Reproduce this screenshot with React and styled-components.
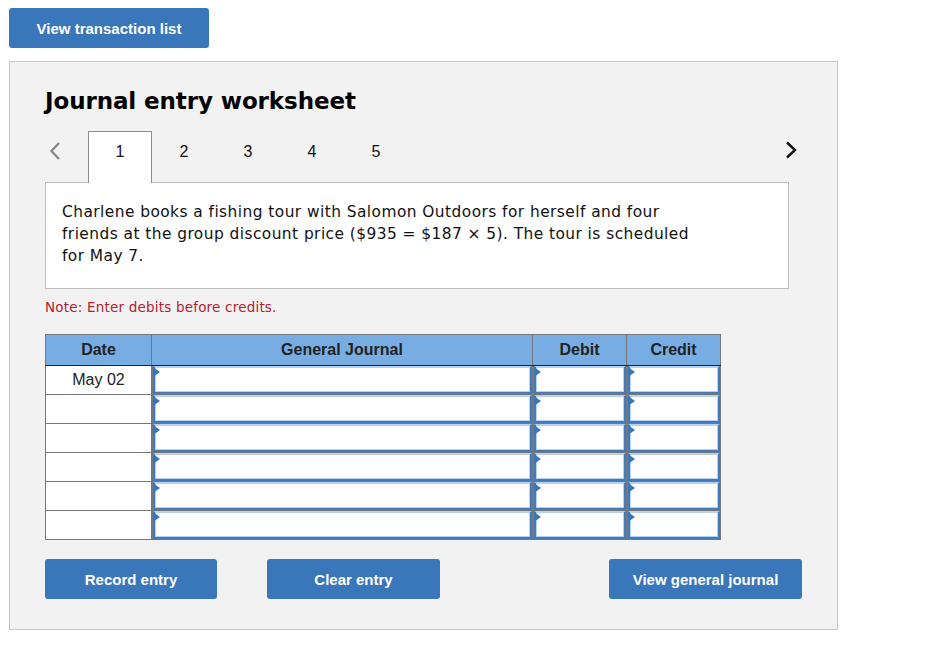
import React from 'react';
import styled, { createGlobalStyle } from 'styled-components';

const GlobalStyle = createGlobalStyle`
  body{
    margin: 0;
    background: #fff;
    font-family: "Liberation Sans", Arial, sans-serif;
  }
`;

const Page = styled.div`
  padding: 8px 0 0 9px;
`;

const Button = styled.button`
  flex-shrink: 0;
  display: inline-flex;
  align-items: center;
  justify-content: center;
  width: ${p => p.w}px;
  height: 40px;
  padding: 0;
  border: 0;
  border-radius: 3px;
  background: #3a76ba;
  color: #fff;
  font-family: "Liberation Sans", Arial, sans-serif;
  font-weight: bold;
  font-size: 15px;
  cursor: pointer;
`;

const Panel = styled.section`
  box-sizing: border-box;
  width: 829px;
  margin-top: 13px;
  padding: 21px 48px 30px 35px;
  background: #f2f2f2;
  border: 1px solid #c8c8c8;
`;

const Heading = styled.h2`
  margin: 0;
  font-family: "DejaVu Sans", Verdana, sans-serif;
  font-size: 23px;
  font-weight: bold;
  letter-spacing: -0.1px;
  line-height: 36px;
  color: #000;
`;

const TabRow = styled.div`
  display: flex;
  align-items: stretch;
  height: 51px;
  margin-top: 12px;
`;

const Arrow = styled.div`
  display: flex;
  align-items: flex-start;
  justify-content: ${p => (p.right ? 'center' : 'flex-start')};
  box-sizing: border-box;
  width: ${p => (p.right ? 44 : 43)}px;
  padding-top: 10px;
  padding-left: ${p => (p.right ? 0 : 4)}px;
  margin-left: ${p => (p.right ? 'auto' : '0')};
  margin-right: ${p => (p.right ? '-24px' : '0')};
  svg{
    display: block;
  }
`;

const Tab = styled.div`
  box-sizing: border-box;
  display: flex;
  align-items: flex-start;
  justify-content: center;
  width: 64px;
  padding-top: 11px;
  font-family: "Liberation Sans", Arial, sans-serif;
  font-size: 16px;
  line-height: 18px;
  color: #111;
  background: ${p => (p.active ? '#fff' : 'transparent')};
  border: 1px solid ${p => (p.active ? '#8c8c8c' : 'transparent')};
  border-bottom: 0;
  position: relative;
  z-index: 1;
  margin-bottom: ${p => (p.active ? '-1px' : '0')};
`;

const Content = styled.div`
  box-sizing: border-box;
  height: 107px;
  padding: 18px 16px 0 16px;
  background: #fff;
  border: 1px solid #bcbcbc;
  font-family: "DejaVu Sans", Verdana, sans-serif;
  font-size: 15.4px;
  letter-spacing: 0.45px;
  line-height: 22px;
  color: #111;
  p{
    margin: 0;
    max-width: 650px;
  }
`;

const Note = styled.p`
  margin: 9px 0 0;
  font-family: "DejaVu Sans", Verdana, sans-serif;
  font-size: 13.5px;
  letter-spacing: 0.2px;
  line-height: 18px;
  color: #b5202e;
`;

const Table = styled.table`
  margin-top: 18px;
  border-collapse: collapse;
  table-layout: fixed;
  width: 676px;
  border: 1px solid #777;
  font-family: "Liberation Sans", Arial, sans-serif;
`;

const Th = styled.th`
  height: 30px;
  padding: 0;
  background: #78ade4;
  border: 1px solid #777;
  border-bottom: 1px solid #222;
  border-left-color: #222;
  font-size: 16px;
  font-weight: bold;
  color: #222;
  &:first-child{
    border-left-color: #777;
  }
`;

const Td = styled.td`
  height: 28px;
  padding: 0;
  background: ${p => (p.input ? '#6f7a86' : '#fff')};
  border: 1px solid #777;
  text-align: center;
  font-size: 16px;
  color: #222;
  position: relative;
`;

const Field = styled.div`
  box-sizing: border-box;
  height: 28px;
  margin-left: 1px;
  background: #fff;
  border: 2px solid #3f7bbd;
  border-top: 1px solid #b6d1ef;
  box-shadow: inset 1px 1px 0 #b6d1ef, inset -1px -1px 0 #b6d1ef;
`;

const Marker = styled.span`
  position: absolute;
  top: 1px;
  left: 1px;
  width: 0;
  height: 0;
  border-top: 5px solid transparent;
  border-bottom: 5px solid transparent;
  border-left: 7px solid #3a76ba;
`;

const Actions = styled.div`
  display: flex;
  align-items: center;
  margin-top: 19px;
  gap: 50px;
  & > :last-child{
    margin-left: 119px;
  }
`;

const rows = ['May 02', '', '', '', '', ''];

const InputCell = () => (
  <Td input>
    <Field />
    <Marker />
  </Td>
);

const App = () => {
  return (
    <Page>
      <GlobalStyle />
      <Button w={200}>View transaction list</Button>
      <Panel>
        <Heading>Journal entry worksheet</Heading>
        <TabRow>
          <Arrow>
            <svg width="12" height="20" viewBox="0 0 12 20">
              <path d="M10 2 L2.5 10 L10 18" fill="none" stroke="#8a8a8a" strokeWidth="2.4" />
            </svg>
          </Arrow>
          <Tab active>1</Tab>
          <Tab>2</Tab>
          <Tab>3</Tab>
          <Tab>4</Tab>
          <Tab>5</Tab>
          <Arrow right>
            <svg width="12" height="18" viewBox="0 0 12 18">
              <path d="M2 1.5 L10 9 L2 16.5" fill="none" stroke="#111" strokeWidth="2.4" />
            </svg>
          </Arrow>
        </TabRow>
        <Content>
          <p>
            Charlene books a fishing tour with Salomon Outdoors for herself and four friends at the group discount price ($935 = $187 × 5). The tour is scheduled for May 7.
          </p>
        </Content>
        <Note>Note: Enter debits before credits.</Note>
        <Table>
          <colgroup>
            <col style={{ width: 106 }} />
            <col style={{ width: 381 }} />
            <col style={{ width: 94 }} />
            <col style={{ width: 94 }} />
          </colgroup>
          <thead>
            <tr>
              <Th>Date</Th>
              <Th>General Journal</Th>
              <Th>Debit</Th>
              <Th>Credit</Th>
            </tr>
          </thead>
          <tbody>
            {rows.map((d, i) => (
              <tr key={i}>
                <Td>{d}</Td>
                <InputCell />
                <InputCell />
                <InputCell />
              </tr>
            ))}
          </tbody>
        </Table>
        <Actions>
          <Button w={172}>Record entry</Button>
          <Button w={173}>Clear entry</Button>
          <Button w={193}>View general journal</Button>
        </Actions>
      </Panel>
    </Page>
  );
};

export default App;
